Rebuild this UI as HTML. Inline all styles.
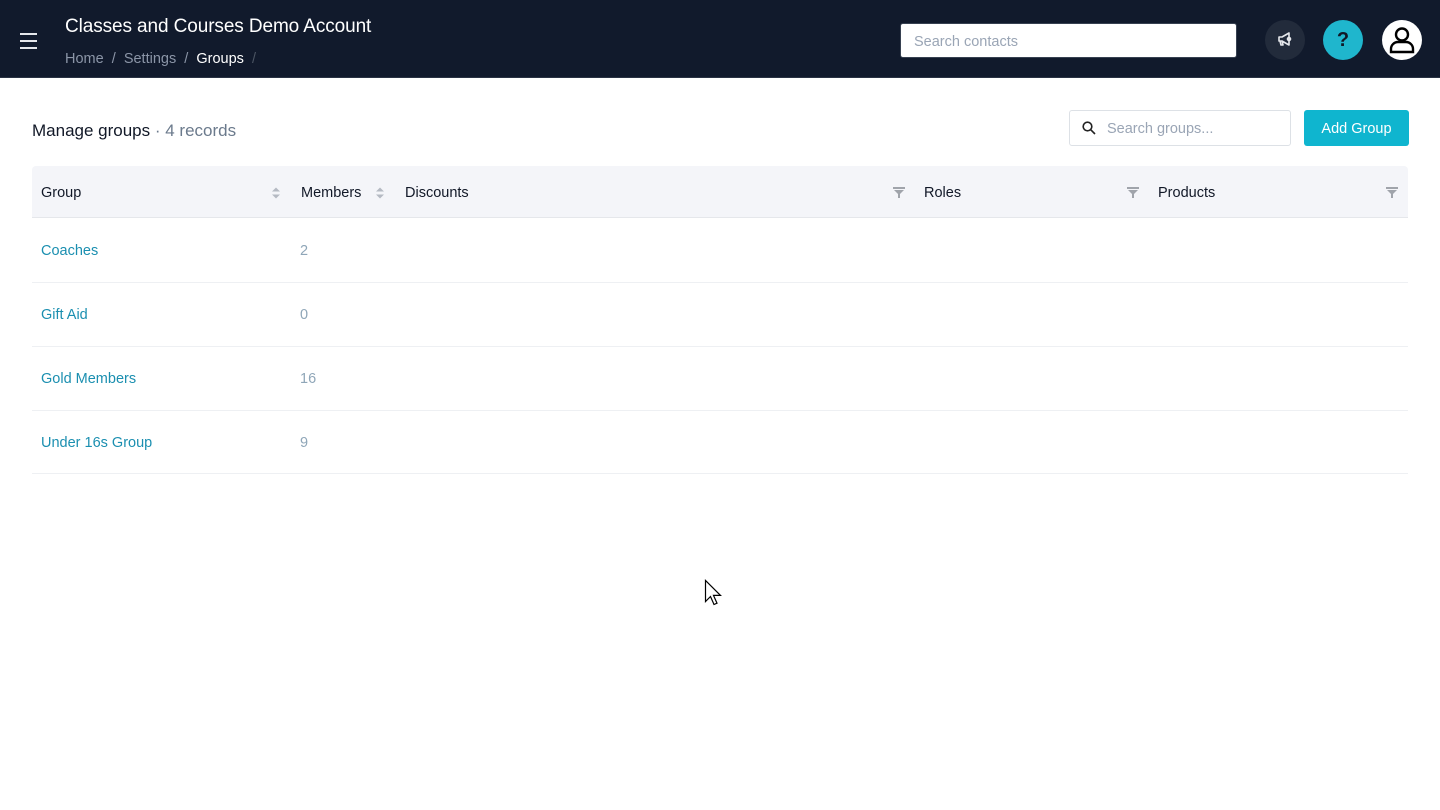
<!DOCTYPE html>
<html><head><meta charset="utf-8"><style>
*{box-sizing:border-box;margin:0;padding:0}
body{width:1440px;height:810px;background:#fff;font-family:"Liberation Sans",sans-serif;position:relative;overflow:hidden;color:#111827}
.top{position:absolute;left:0;top:0;width:1440px;height:78px;background:#111a2c;border-bottom:1px solid #2a3344}
.abs{position:absolute}
.burger span{display:block;width:17px;height:2px;background:#e5e7eb;margin-bottom:5px}
.title{left:65px;top:16px;color:#fff;font-size:19px;letter-spacing:-0.1px}
.crumb{left:65px;top:51px;font-size:14.5px;color:#8b95a7}
.crumb b{color:#fff;font-weight:normal}
.search{left:900px;top:23px;width:337px;height:35px;background:#fff;border-radius:3px;border:1px solid #374151;font-size:14.5px;color:#9aa5b5;padding:10px 13px}
.circ{border-radius:50%;width:40px;height:40px}
.sg{left:1069px;top:110px;width:222px;height:36px;border:1px solid #dde1e6;border-radius:3px;font-size:14.5px;color:#9aa5b5;padding:10px 0 0 37px}
.btn{left:1304px;top:110px;width:105px;height:36px;background:#0fb5cf;border-radius:3px;color:#fff;font-size:14.5px;text-align:center;line-height:38px}
.thead{left:32px;top:166px;width:1376px;height:52px;background:#f4f5f9;border-bottom:1px solid #e5e7eb;border-radius:4px 4px 0 0}
.th{top:185px;font-size:14.5px;color:#111827}
.row{left:32px;width:1376px;height:64px;border-bottom:1px solid #eef0f3}
.link{left:41px;font-size:14.5px;color:#1b8fb0}
.num{left:300px;font-size:14.5px;color:#8fa6b8}
</style></head><body>
<div class="top"></div>
<div class="abs burger" style="left:20px;top:33px"><span></span><span></span><span></span></div>
<div class="abs title">Classes and Courses Demo Account</div>
<div class="abs crumb">Home &nbsp;/ &nbsp;Settings &nbsp;/ &nbsp;<b>Groups</b> &nbsp;<span style="color:#4b5563">/</span></div>
<div class="abs search">Search contacts</div>
<div class="abs circ" style="left:1265px;top:20px;background:#222b3b">
<svg width="40" height="40" viewBox="0 0 40 40" fill="none" stroke="#e5e7eb" stroke-width="1.6" stroke-linejoin="round"><path d="M14 17h3l7-4v12l-7-4h-3z M15 21l1 4h2l-1-4"/><circle cx="24" cy="19" r="1.5"/></svg></div>
<div class="abs circ" style="left:1323px;top:20px;background:#1fb6cd;color:#111827;font-size:20px;font-weight:bold;text-align:center;line-height:40px">?</div>
<div class="abs circ" style="left:1382px;top:20px;background:#fff">
<svg width="40" height="40" viewBox="0 0 40 40" fill="none" stroke="#000" stroke-width="2.4"><circle cx="20" cy="14.5" r="6"/><path d="M9 32v-3a7 7 0 0 1 7-7h8a7 7 0 0 1 7 7v3z"/></svg></div>

<div class="abs" style="left:32px;top:121px;font-size:17px">Manage groups <span style="color:#6b7a8c">· 4 records</span></div>
<div class="abs sg">Search groups...</div>
<svg class="abs" style="left:1082px;top:121px" width="14" height="14" viewBox="0 0 14 14" fill="none" stroke="#222" stroke-width="1.6"><circle cx="5.5" cy="5.5" r="4.3"/><path d="M8.7 8.7L13 13"/></svg>
<div class="abs btn">Add Group</div>

<div class="abs thead"></div>
<div class="abs th" style="left:41px">Group</div>
<div class="abs th" style="left:301px">Members</div>
<div class="abs th" style="left:405px">Discounts</div>
<div class="abs th" style="left:924px">Roles</div>
<div class="abs th" style="left:1158px">Products</div>
<svg class="abs" style="left:271px;top:186px" width="10" height="14"><path d="M1 5.5L5 1.5 9 5.5z M1 8.5L5 12.5 9 8.5z" fill="#b5bac3"/></svg>
<svg class="abs" style="left:375px;top:186px" width="10" height="14"><path d="M1 5.5L5 1.5 9 5.5z M1 8.5L5 12.5 9 8.5z" fill="#b5bac3"/></svg>
<svg class="abs" style="left:893px;top:187px" width="12" height="12"><path d="M0 0h12v2H0z M1 3h10L7 7v4H5V7z" fill="#a0a4ab"/></svg>
<svg class="abs" style="left:1127px;top:187px" width="12" height="12"><path d="M0 0h12v2H0z M1 3h10L7 7v4H5V7z" fill="#a0a4ab"/></svg>
<svg class="abs" style="left:1386px;top:187px" width="12" height="12"><path d="M0 0h12v2H0z M1 3h10L7 7v4H5V7z" fill="#a0a4ab"/></svg>

<div class="abs row" style="top:219px"></div>
<div class="abs row" style="top:283px"></div>
<div class="abs row" style="top:347px"></div>
<div class="abs row" style="top:410px"></div>
<div class="abs link" style="top:243px">Coaches</div><div class="abs num" style="top:243px">2</div>
<div class="abs link" style="top:307px">Gift Aid</div><div class="abs num" style="top:307px">0</div>
<div class="abs link" style="top:371px">Gold Members</div><div class="abs num" style="top:371px">16</div>
<div class="abs link" style="top:435px">Under 16s Group</div><div class="abs num" style="top:435px">9</div>

<svg class="abs" style="left:704px;top:579px" width="20" height="30"><path d="M1.5 1.5v21l5-5 3.5 8 3-1.3-3.5-7.8h7z" fill="#fff" stroke="#000" stroke-width="1.2"/></svg>
</body></html>
